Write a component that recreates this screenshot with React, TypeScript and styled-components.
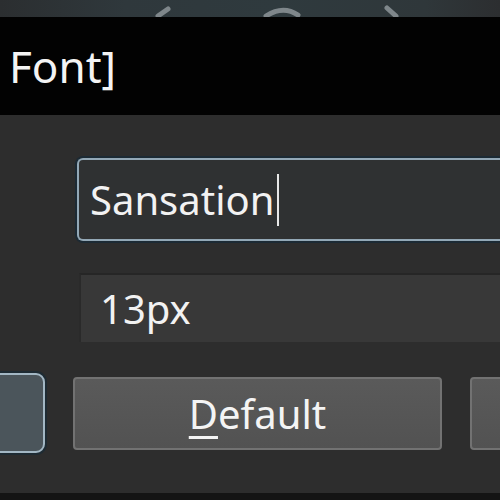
import React from "react";
import styled, { createGlobalStyle } from "styled-components";

const GlobalStyle = createGlobalStyle`
  html, body {
    margin: 0;
    padding: 0;
    background: #2d2d2d;
  }
`;

const Window = styled.div`
  width: 500px;
  height: 500px;
  overflow: hidden;
  display: flex;
  flex-direction: column;
  font-family: "Noto Sans", "Open Sans", sans-serif;
  color: #f2f2f2;
`;

const TopStrip = styled.div`
  height: 17px;
  flex-shrink: 0;
  background: linear-gradient(
    90deg,
    #2b2e30 0%,
    #2f383c 25%,
    #2f3a3e 55%,
    #2f373a 85%,
    #2c2e30 100%
  );
  svg {
    display: block;
  }
`;

const TitleBar = styled.div`
  height: 98px;
  flex-shrink: 0;
  background: #020202;
  display: flex;
  align-items: center;
  padding-left: 9px;
  font-size: 44px;
  color: #f4f4f4;
`;

const Body = styled.div`
  flex: 1;
  display: flex;
  flex-direction: column;
  padding-top: 43px;
  background: #2d2d2d;
`;

const TextField = styled.div<{ focused?: boolean; indent: number; h: number }>`
  margin-left: ${(p) => p.indent}px;
  width: 480px;
  height: ${(p) => p.h}px;
  box-sizing: border-box;
  display: flex;
  align-items: center;
  font-size: 40px;
  ${(p) =>
    p.focused
      ? `
    border: 2px solid #93a8b6;
    border-right: none;
    border-radius: 6px 0 0 6px;
    background: #2f3132;
    box-shadow: 0 0 0 2px #1c2a34;
    padding-left: 11px;
  `
      : `
    background: #383838;
    border-top: 2px solid #262626;
    border-left: 2px solid #2a2a2a;
    padding-left: 19px;
  `}
`;

const Caret = styled.span`
  display: inline-block;
  width: 2px;
  height: 52px;
  margin-left: 3px;
  background: #e8e8e8;
`;

const ButtonRow = styled.div`
  display: flex;
  margin-top: 31px;
  margin-left: -40px;
  gap: 28px;
  align-items: center;
`;

const Button = styled.div<{ primary?: boolean; w: number }>`
  width: ${(p) => p.w}px;
  flex-shrink: 0;
  box-sizing: border-box;
  display: flex;
  align-items: center;
  justify-content: center;
  font-size: 40px;
  color: #f4f4f4;
  ${(p) =>
    p.primary
      ? `
    height: 80px;
    border: 2px solid #a3b7c4;
    border-radius: 9px;
    background: #4b555b;
    box-shadow: 0 0 0 2px #1e2b33;
  `
      : `
    height: 73px;
    border: 2px solid #727272;
    border-radius: 4px;
    background: linear-gradient(#5a5a5a, #525252);
  `}
`;

const Mnemonic = styled.span`
  text-decoration: underline;
  text-underline-offset: 7px;
  text-decoration-thickness: 3px;
`;

const Spacer = styled.div`
  flex: 1;
`;

const BottomEdge = styled.div`
  height: 7px;
  background: #141414;
`;

export default function App() {
  return (
    <>
      <GlobalStyle />
      <Window>
        <TopStrip>
          <svg width="500" height="17" viewBox="0 0 500 17">
            <g stroke="#8d9599" strokeWidth="5" fill="none" strokeLinecap="round" opacity="0.85">
              <path d="M158 16 L168 9" />
              <path d="M266 16 Q283 5 298 15" />
              <path d="M387 8 L396 16" />
            </g>
          </svg>
        </TopStrip>
        <TitleBar>Font]</TitleBar>
        <Body>
          <TextField focused indent={77} h={83}>
            Sansation
            <Caret />
          </TextField>
          <TextField indent={79} h={69} style={{ marginTop: 32 }}>
            13px
          </TextField>
          <ButtonRow>
            <Button primary w={85} />
            <Button w={369}>
              <span>
                <Mnemonic>D</Mnemonic>efault
              </span>
            </Button>
            <Button w={100} />
          </ButtonRow>
          <Spacer />
          <BottomEdge />
        </Body>
      </Window>
    </>
  );
}
